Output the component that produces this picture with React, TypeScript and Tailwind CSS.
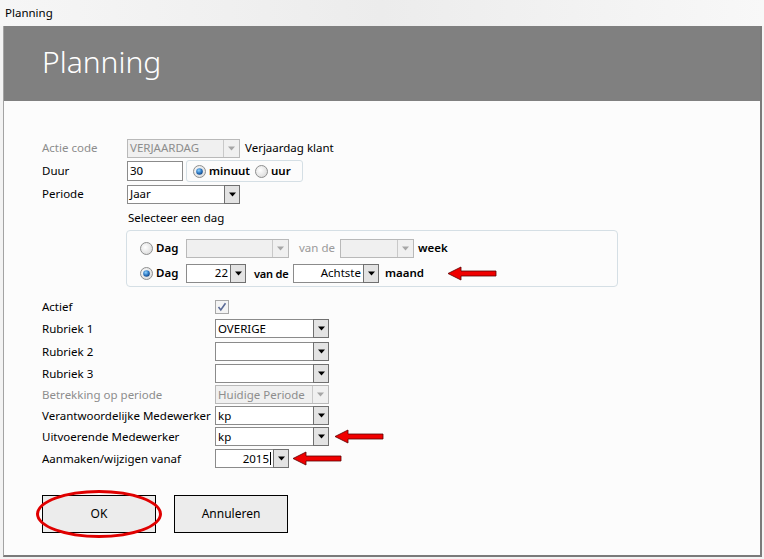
import React from "react";

const font = { fontFamily: '"Noto Sans", "Open Sans", sans-serif' };

function Tri({ disabled }: { disabled?: boolean }) {
  return (
    <svg width="9" height="5" viewBox="0 0 9 5">
      <path d="M1 0.5h7L4.5 4.5z" fill={disabled ? "#a6a6a6" : "#000"} />
    </svg>
  );
}

function Combo({
  w,
  value = "",
  right,
  disabled,
  caret,
}: {
  w: string;
  value?: string;
  right?: boolean;
  disabled?: boolean;
  caret?: boolean;
}) {
  return (
    <div
      className={`${w} shrink-0 h-[19px] flex border ${
        disabled ? "border-[#b9b9b9] bg-[#f0f0f0] text-[#8d8d8d]" : "border-[#8b8b8b] bg-white text-black"
      }`}
    >
      <div className={`flex-1 flex items-center px-[2px] leading-none whitespace-nowrap overflow-hidden ${right ? "justify-end" : ""}`}>
        {value}
        {caret && <span className="w-px h-[13px] bg-black ml-[1px]" />}
      </div>
      <div
        className={`w-[16px] flex items-center justify-center ${
          disabled ? "border-l border-[#c9c9c9] bg-[#f0f0f0]" : "border border-[#707070] -m-px ml-0 bg-[#e3e3e3]"
        }`}
      >
        <Tri disabled={disabled} />
      </div>
    </div>
  );
}

function Radio({ on }: { on?: boolean }) {
  return (
    <svg width="13" height="13" viewBox="0 0 13 13" className="shrink-0">
      <defs>
        <radialGradient id="rg" cx="40%" cy="40%" r="70%">
          <stop offset="0" stopColor="#ffffff" />
          <stop offset="1" stopColor="#d8d8d8" />
        </radialGradient>
        <radialGradient id="rb" cx="40%" cy="35%" r="70%">
          <stop offset="0" stopColor="#8fd3ff" />
          <stop offset="0.6" stopColor="#2a74c0" />
          <stop offset="1" stopColor="#123f7a" />
        </radialGradient>
      </defs>
      <circle cx="6.5" cy="6.5" r="6" fill="url(#rg)" stroke="#8e8f8f" />
      {on && <circle cx="6.5" cy="6.5" r="3.3" fill="url(#rb)" />}
    </svg>
  );
}

function Arrow() {
  return (
    <svg width="50" height="15" viewBox="0 0 50 15" className="shrink-0">
      <path d="M1 7.5L14 1v4h35v5H14v4z" fill="#f00000" stroke="#5a0000" strokeWidth="0.8" />
    </svg>
  );
}

function Row({ label, gray, children, className = "" }: { label: string; gray?: boolean; children?: React.ReactNode; className?: string }) {
  return (
    <div className={`flex items-center h-[19px] ${className}`}>
      <div className={`w-[173px] shrink-0 whitespace-nowrap ${gray ? "text-[#8d8d8d]" : "text-black"}`}>{label}</div>
      {children}
    </div>
  );
}

export default function App() {
  return (
    <div className="w-[764px] h-[559px] bg-[#f3f3f3] text-[11.5px] leading-none overflow-hidden" style={font}>
      {/* title bar */}
      <div className="h-[26px] flex items-center px-[5px] bg-gradient-to-r from-[#f6f6f6] via-[#ececec] to-[#f8f8f8] text-black">
        Planning
      </div>
      <div className="ml-[3px] w-[759px] h-[531px] border-l border-r-2 border-b-2 border-l-[#a3a3a3] border-r-[#7a7a7a] border-b-[#7a7a7a] bg-[#fcfcfc] flex flex-col">
        <div className="h-[75px] bg-[#808080] flex items-center pl-[38px] pb-[4px]">
          <span className="text-white text-[30px] font-light">Planning</span>
        </div>

        <div className="pl-[38px] pt-[37px] flex flex-col">
          {/* Actie code */}
          <div className="flex items-center h-[20px]">
            <div className="w-[85px] text-[#8d8d8d]">Actie code</div>
            <Combo w="w-[113px]" value="VERJAARDAG" disabled />
            <span className="ml-[5px] text-black">Verjaardag klant</span>
          </div>
          {/* Duur */}
          <div className="flex items-center h-[22px] mt-[2px]">
            <div className="w-[85px]">Duur</div>
            <div className="w-[56px] h-[20px] border border-[#8b8b8b] bg-white flex items-center px-[2px]">30</div>
            <div className="ml-[3px] w-[117px] h-[22px] border border-[#d5dfe5] rounded-[3px] flex items-center pl-[6px] gap-[3px]">
              <Radio on />
              <span className="font-semibold mr-[2px]">minuut</span>
              <Radio />
              <span className="font-semibold">uur</span>
            </div>
          </div>
          {/* Periode */}
          <div className="flex items-center h-[20px] mt-[2px]">
            <div className="w-[85px]">Periode</div>
            <Combo w="w-[113px]" value="Jaar" />
          </div>
          <div className="ml-[86px] mt-[8px] h-[13px]">Selecteer een dag</div>
          {/* group */}
          <div className="ml-[84px] mt-[5px] w-[492px] h-[57px] border border-[#d5dfe5] rounded-[4px] pl-[13px] pt-[8px] flex flex-col gap-[7px]">
            <div className="flex items-center h-[18px] whitespace-nowrap">
              <Radio />
              <span className="ml-[3px] w-[30px] shrink-0 font-semibold">Dag</span>
              <Combo w="w-[103px]" disabled />
              <span className="w-[51px] shrink-0 pl-[10px] text-[#9a9a9a]">van de</span>
              <Combo w="w-[74px]" disabled />
              <span className="ml-[4px] font-semibold">week</span>
            </div>
            <div className="flex items-center h-[18px] whitespace-nowrap">
              <Radio on />
              <span className="ml-[3px] w-[30px] shrink-0 font-semibold">Dag</span>
              <Combo w="w-[60px]" value="22" right />
              <span className="w-[47px] shrink-0 pl-[8px] font-semibold text-[11px] tracking-[-0.2px]">van de</span>
              <Combo w="w-[86px]" value="Achtste" right />
              <span className="w-[68px] shrink-0 pl-[6px] font-semibold">maand</span>
              <Arrow />
            </div>
          </div>

          {/* lower section */}
          <Row label="Actief" className="mt-[10px]">
            <svg width="14" height="14" viewBox="0 0 14 14">
              <rect x="0.5" y="0.5" width="13" height="13" fill="#f4f4f4" stroke="#a8a8a8" />
              <path d="M3.5 7l2.3 3L10.5 3.2" fill="none" stroke="#5a6a96" strokeWidth="1.6" />
            </svg>
          </Row>
          <Row label="Rubriek 1" className="mt-[3px]">
            <Combo w="w-[114px]" value="OVERIGE" />
          </Row>
          <Row label="Rubriek 2" className="mt-[4px]">
            <Combo w="w-[114px]" />
          </Row>
          <Row label="Rubriek 3" className="mt-[3px]">
            <Combo w="w-[114px]" />
          </Row>
          <Row label="Betrekking op periode" gray className="mt-[2px]">
            <Combo w="w-[114px]" value="Huidige Periode" disabled />
          </Row>
          <Row label="Verantwoordelijke Medewerker" className="mt-[2px]">
            <Combo w="w-[114px]" value="kp" />
          </Row>
          <Row label="Uitvoerende Medewerker" className="mt-[2px]">
            <Combo w="w-[114px]" value="kp" />
            <span className="ml-[5px]">
              <Arrow />
            </span>
          </Row>
          <Row label="Aanmaken/wijzigen vanaf" className="mt-[3px]">
            <Combo w="w-[74px]" value="2015" right caret />
            <span className="ml-[3px]">
              <Arrow />
            </span>
          </Row>

          {/* buttons */}
          <div className="flex gap-[18px] mt-[27px]">
            <div className="relative">
              <button className="w-[114px] h-[38px] border border-black bg-[#ececec] text-black text-[12px]" style={font}>
                OK
              </button>
              <div className="absolute left-[-6px] top-[-5px] w-[126px] h-[48px] rounded-[50%] border-[3px] border-[#e00000] pointer-events-none" />
            </div>
            <button className="w-[114px] h-[38px] border border-black bg-[#ececec] text-black text-[12px]" style={font}>
              Annuleren
            </button>
          </div>
        </div>
      </div>
    </div>
  );
}
